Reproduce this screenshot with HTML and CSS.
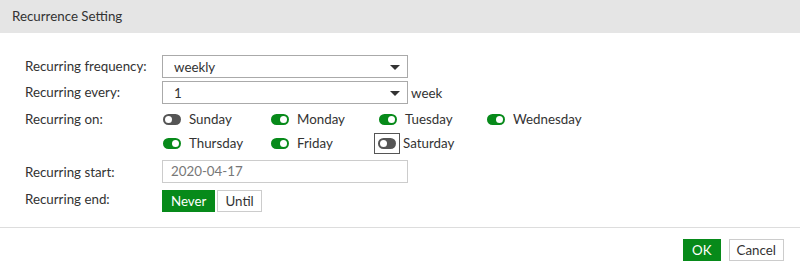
FILE: index.html
```html
<!DOCTYPE html>
<html>
<head>
<meta charset="utf-8">
<link rel="stylesheet" href="styles.css">
</head>
<body>
<div class="dialog">
  <div class="header">Recurrence Setting</div>
  <div class="content">
    <div class="row r-sel">
      <div class="label">Recurring frequency:</div>
      <div class="field"><div class="select"><span>weekly</span><i class="caret"></i></div></div>
    </div>
    <div class="row r-sel">
      <div class="label">Recurring every:</div>
      <div class="field"><div class="select"><span>1</span><i class="caret"></i></div><span class="unit">week</span></div>
    </div>
    <div class="row r-days">
      <div class="label">Recurring on:</div>
      <div class="days">
        <div class="day"><span class="tg"></span>Sunday</div>
        <div class="day"><span class="tg on"></span>Monday</div>
        <div class="day"><span class="tg on"></span>Tuesday</div>
        <div class="day"><span class="tg on"></span>Wednesday</div>
        <div class="day"><span class="tg on"></span>Thursday</div>
        <div class="day"><span class="tg on"></span>Friday</div>
        <div class="day focus"><span class="fbox"><span class="tg"></span></span>Saturday</div>
      </div>
    </div>
    <div class="row r-start">
      <div class="label">Recurring start:</div>
      <div class="field"><div class="input">2020-04-17</div></div>
    </div>
    <div class="row r-end">
      <div class="label">Recurring end:</div>
      <div class="field"><span class="btn primary">Never</span><span class="btn">Until</span></div>
    </div>
  </div>
  <div class="footer">
    <span class="btn primary ok">OK</span><span class="btn">Cancel</span>
  </div>
</div>
</body>
</html>
```
FILE: styles.css
```css
* { box-sizing: border-box; }
html, body { margin: 0; padding: 0; background: #fff; }
body { font-family: Lato, "Open Sans", sans-serif; font-size: 13.33px; color: #333; }
.dialog { width: 800px; height: 271px; display: flex; flex-direction: column; }
.header { height: 33px; background: #e5e5e5; padding-left: 12px; line-height: 33px; color: #333; }
.content { padding: 22px 0 0 25px; height: 194px; }
.row { display: flex; align-items: center; }
.label { width: 137px; flex: none; }
.field { display: flex; align-items: center; }
.r-sel { height: 23px; margin-bottom: 3px; }
.r-sel .label { margin-top: -2px; }
.select { width: 246px; height: 23px; border: 1px solid #aaa; display: flex; align-items: center; padding-left: 11px; position: relative; }
.caret { position: absolute; right: 7px; top: 9px; width: 0; height: 0; border-left: 5px solid transparent; border-right: 5px solid transparent; border-top: 5px solid #333; }
.unit { margin-left: 3px; }
.r-days { align-items: flex-start; margin-top: 3px; }
.r-days .label { line-height: 24px; }
.days { display: grid; grid-template-columns: repeat(4, 108px); grid-auto-rows: 24px; }
.day { display: flex; align-items: center; }
.tg { width: 18px; height: 11px; border-radius: 6px; background: #555; position: relative; margin: 0 8px 0 1px; flex: none; }
.tg::after { content: ""; position: absolute; left: 2px; top: 2px; width: 7px; height: 7px; border-radius: 50%; background: #fff; }
.tg.on { background: #078a1a; }
.tg.on::after { left: 9px; }
.focus { margin-left: -4px; }
.fbox { width: 26px; height: 21px; border: 1px solid #555; display: flex; align-items: center; justify-content: center; margin-right: 3px; }
.fbox .tg { margin: 0; }
.r-start { margin-top: 5px; height: 23px; }
.input { width: 246px; height: 23px; border: 1px solid #ccc; padding-left: 8px; line-height: 21px; color: #777; }
.r-end { margin-top: 6px; height: 23px; }
.r-end .label { margin-top: -4px; }
.btn { display: inline-block; height: 22px; line-height: 20px; padding: 0 7px; border: 1px solid #ccc; background: #fff; color: #333; margin-right: 2px; }
.btn.primary { background: #078a1a; border-color: #078a1a; color: #fff; padding: 0 8px; }
.footer { border-top: 1px solid #ddd; flex: 1; display: flex; justify-content: flex-end; align-items: flex-start; padding: 11px 16px 0 0; }
.footer .btn { margin-right: 0; }
.footer .ok { margin-right: 8px; }
```
